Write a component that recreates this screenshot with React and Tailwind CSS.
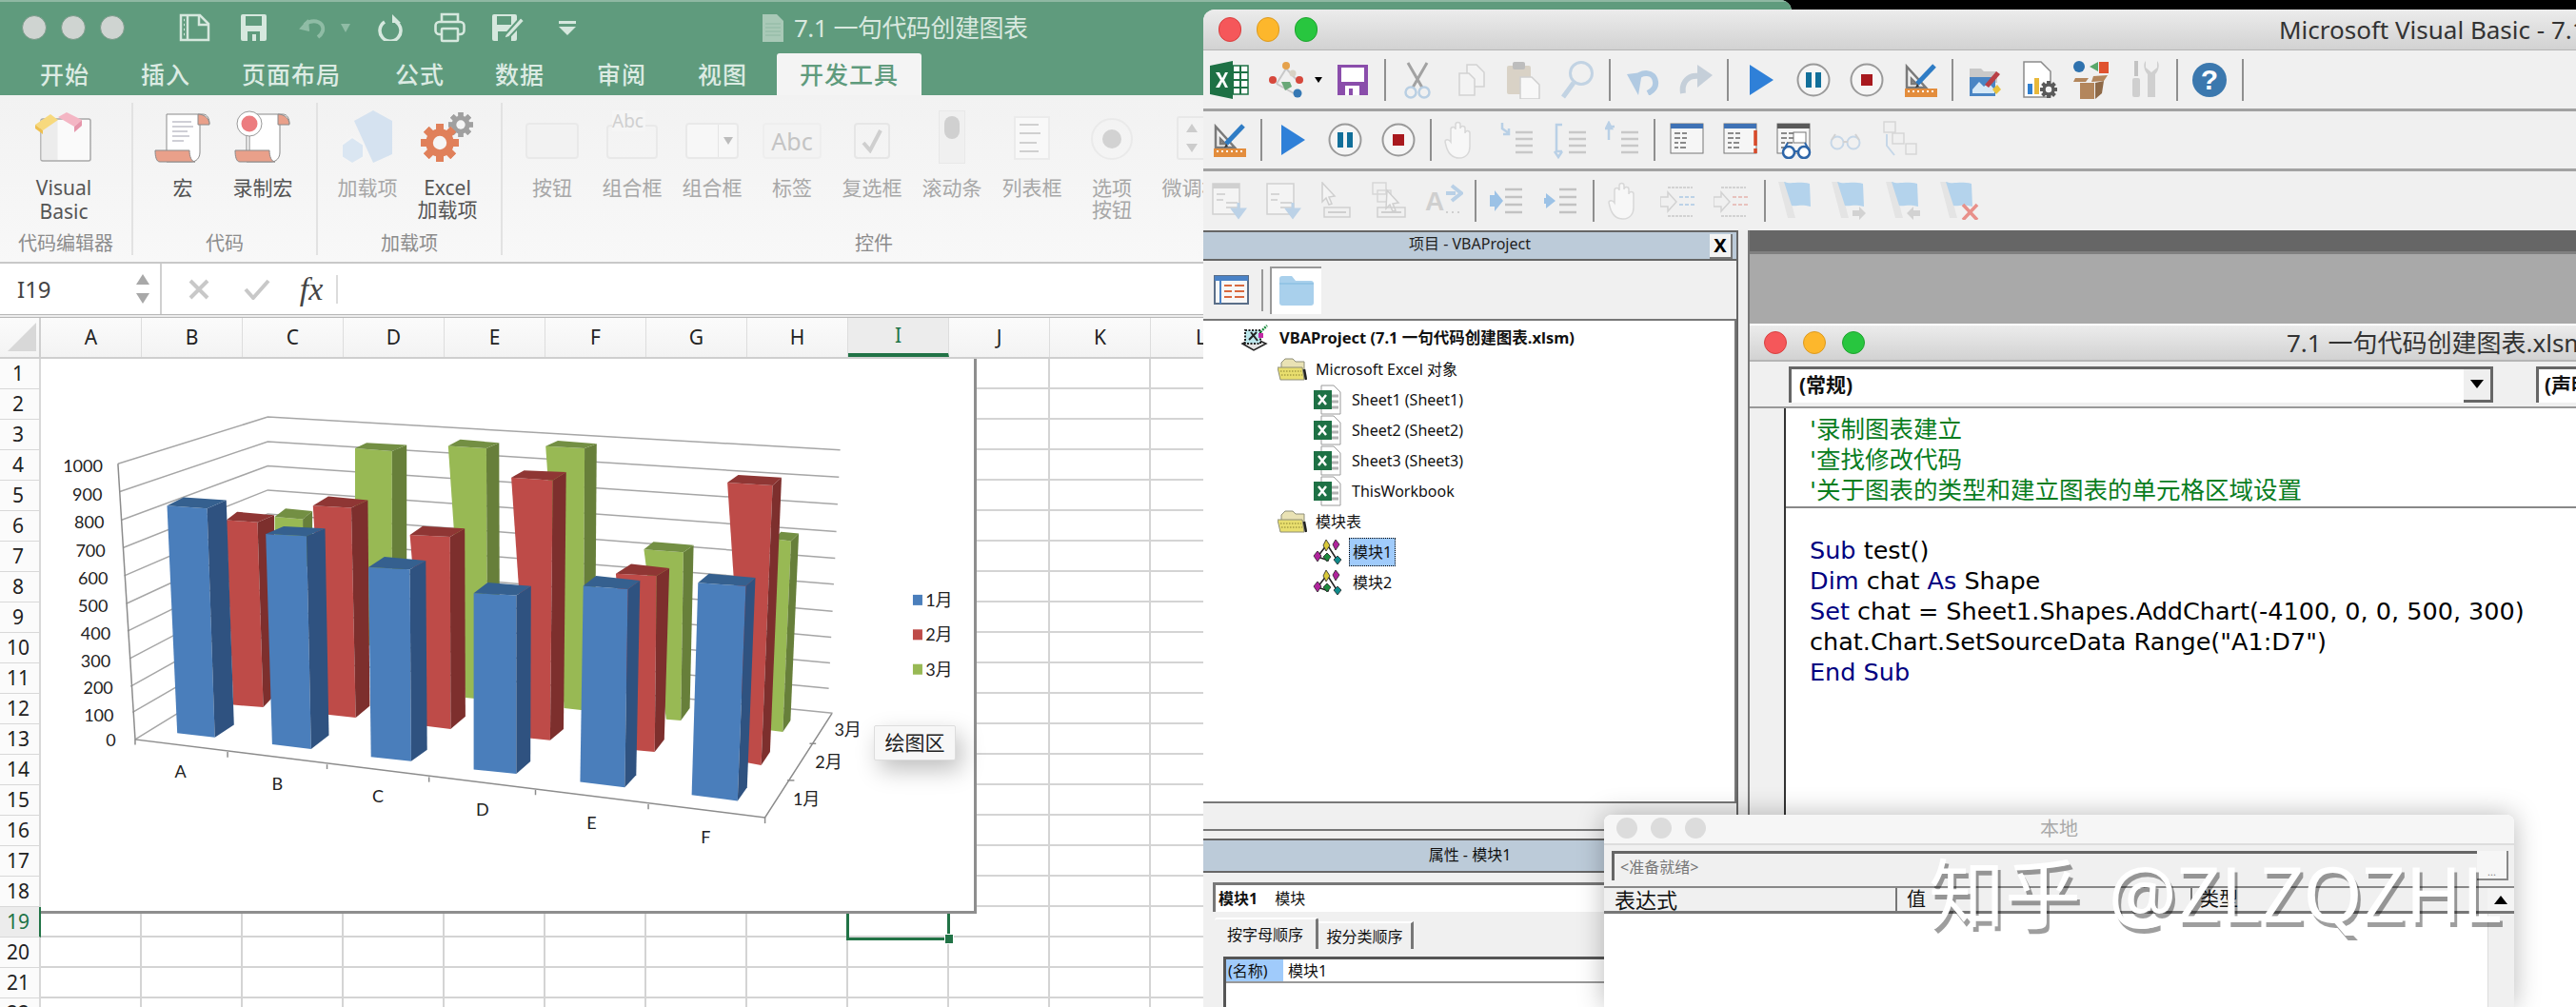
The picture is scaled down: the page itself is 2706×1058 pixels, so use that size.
import React from "react";

const COLS = ["A", "B", "C", "D", "E", "F", "G", "H", "I", "J", "K", "L"];
const ROWS = Array.from({ length: 22 }, (_, i) => i + 1);

// chart points were read off a zoomed crop, these convert them to chart pixels
const X = (c) => c / 1.4933 - 43;
const Y = (c) => c / 2.279 - 6;
const pts = (arr) => arr.map(([x, y]) => `${X(x).toFixed(1)},${Y(y).toFixed(1)}`).join(" ");

const GRID = [
  [[185, 265], [420, 153], [1318, 232]],
  [[187, 332], [420, 212], [1316, 297]],
  [[190, 400], [420, 270], [1314, 362]],
  [[193, 466], [420, 328], [1312, 427]],
  [[195, 533], [420, 385], [1310, 491]],
  [[198, 600], [420, 443], [1308, 553]],
  [[200, 666], [421, 500], [1306, 618]],
  [[203, 732], [421, 557], [1304, 680]],
  [[205, 798], [421, 614], [1302, 742]],
  [[208, 860], [421, 672], [1300, 803]],
  [[212, 925], [422, 728], [1306, 862]],
];

const GREEN = { f: "#98b954", s: "#677f3a", t: "#738f43" };
const RED = { f: "#be4b48", s: "#7d2f2d", t: "#8f3634" };
const BLUE = { f: "#4a7ebb", s: "#2f5280", t: "#35608f" };

// front face, side face, top face
const BARS = [
  [GREEN, [[431, 392], [475, 398], [475, 520], [431, 520]], [[475, 398], [490, 378], [490, 500], [475, 520]], [[431, 392], [448, 372], [490, 378], [475, 398]]],
  [GREEN, [[557, 228], [615, 235], [615, 700], [557, 700]], [[615, 235], [638, 220], [638, 670], [615, 700]], [[557, 228], [575, 215], [638, 220], [615, 235]]],
  [GREEN, [[703, 222], [763, 228], [765, 830], [730, 825]], [[763, 228], [783, 215], [784, 800], [765, 830]], [[703, 222], [722, 207], [783, 215], [763, 228]]],
  [GREEN, [[856, 223], [917, 228], [915, 855], [885, 850]], [[917, 228], [936, 217], [933, 830], [915, 855]], [[856, 223], [875, 210], [936, 217], [917, 228]]],
  [GREEN, [[1010, 470], [1072, 477], [1068, 880], [1045, 877]], [[1072, 477], [1088, 460], [1082, 850], [1068, 880]], [[1010, 470], [1025, 452], [1088, 460], [1072, 477]]],
  [GREEN, [[1215, 445], [1241, 450], [1228, 907], [1208, 903]], [[1241, 450], [1253, 432], [1240, 880], [1228, 907]], [[1215, 445], [1225, 428], [1253, 432], [1241, 450]]],
  [RED, [[355, 400], [404, 405], [413, 848], [366, 842]], [[404, 405], [430, 388], [430, 820], [413, 848]], [[355, 400], [372, 380], [430, 388], [404, 405]]],
  [RED, [[491, 365], [551, 370], [558, 873], [510, 865]], [[551, 370], [577, 352], [580, 845], [558, 873]], [[491, 365], [515, 343], [577, 352], [551, 370]]],
  [RED, [[643, 435], [706, 440], [707, 900], [668, 893]], [[706, 440], [729, 420], [730, 870], [707, 900]], [[643, 435], [663, 414], [729, 420], [706, 440]]],
  [RED, [[802, 298], [867, 305], [863, 927], [830, 922]], [[867, 305], [888, 285], [884, 900], [863, 927]], [[802, 298], [822, 281], [888, 285], [867, 305]]],
  [RED, [[966, 528], [1030, 533], [1027, 955], [990, 950]], [[1030, 533], [1050, 515], [1042, 925], [1027, 955]], [[966, 528], [990, 505], [1050, 515], [1030, 533]]],
  [RED, [[1141, 310], [1212, 317], [1194, 987], [1170, 980]], [[1212, 317], [1226, 298], [1208, 955], [1194, 987]], [[1141, 310], [1158, 292], [1226, 298], [1212, 317]]],
  [BLUE, [[262, 365], [325, 372], [337, 920], [278, 910]], [[325, 372], [355, 352], [367, 890], [337, 920]], [[262, 365], [288, 345], [355, 352], [325, 372]]],
  [BLUE, [[417, 433], [481, 438], [488, 948], [427, 937]], [[481, 438], [510, 420], [516, 915], [488, 948]], [[417, 433], [445, 415], [510, 420], [481, 438]]],
  [BLUE, [[578, 513], [643, 518], [645, 977], [582, 967]], [[643, 518], [668, 497], [670, 950], [645, 977]], [[578, 513], [603, 488], [668, 497], [643, 518]]],
  [BLUE, [[743, 575], [810, 580], [810, 1007], [743, 997]], [[810, 580], [833, 558], [832, 978], [810, 1007]], [[743, 575], [765, 549], [833, 558], [810, 580]]],
  [BLUE, [[915, 557], [985, 565], [980, 1040], [910, 1027]], [[985, 565], [1004, 545], [998, 1010], [980, 1040]], [[915, 557], [935, 533], [1004, 545], [985, 565]]],
  [BLUE, [[1095, 550], [1170, 558], [1157, 1072], [1085, 1058]], [[1170, 558], [1185, 538], [1172, 1040], [1157, 1072]], [[1095, 550], [1112, 528], [1185, 538], [1170, 558]]],
];

const AXIS = [
  ["1000", 130, 270], ["900", 137, 338], ["800", 140, 404], ["700", 142, 471], ["600", 146, 538], ["500", 146, 604],
  ["400", 150, 670], ["300", 150, 735], ["200", 154, 800], ["100", 155, 866], ["0", 174, 926],
  ["A", 283, 1000], ["B", 435, 1030], ["C", 593, 1060], ["D", 757, 1091], ["E", 928, 1123], ["F", 1107, 1157],
  ["1月", 1265, 1067], ["2月", 1300, 977], ["3月", 1330, 900],
];

const Chart = () => (
  <svg width="980" height="580" className="block">
    {GRID.map((g, i) => (
      <polyline key={i} points={pts(g)} fill="none" stroke="#a6a6a6" strokeWidth="1.5" />
    ))}
    <polyline points={pts([[185, 265], [212, 925], [1200, 1112], [1305, 863]])} fill="none" stroke="#8c8c8c" strokeWidth="1.5" />
    {[[357, 955, 357, 968], [513, 985, 513, 996], [673, 1015, 673, 1027], [840, 1046, 840, 1058], [1017, 1080, 1017, 1092], [1200, 1112, 1200, 1126], [212, 925, 212, 938], [1235, 1023, 1246, 1023], [1270, 935, 1280, 935]].map(
      ([a, b, c, d], i) => (
        <line key={i} x1={X(a)} y1={Y(b)} x2={X(c)} y2={Y(d)} stroke="#8c8c8c" strokeWidth="1.5" />
      ),
    )}
    {BARS.map(([c, front, side, top], i) => (
      <g key={i}>
        <polygon points={pts(front)} fill={c.f} />
        <polygon points={pts(side)} fill={c.s} />
        <polygon points={pts(top)} fill={c.t} />
      </g>
    ))}
    {AXIS.map(([t, x, y]) => (
      <text key={t} x={X(x)} y={Y(y)} textAnchor="middle" dominantBaseline="central" fontSize="18" fill="#222" className="font-['Lato','Noto_Sans_CJK_SC',sans-serif]">
        {t}
      </text>
    ))}
    {[["1月", 590, BLUE.f], ["2月", 673, RED.f], ["3月", 756, GREEN.f]].map(([t, y, c]) => (
      <g key={t}>
        <rect x={X(1432)} y={Y(y) - 5} width="10" height="11" fill={c} />
        <text x={X(1473)} y={Y(y)} textAnchor="middle" dominantBaseline="central" fontSize="18" fill="#222" className="font-['Lato','Noto_Sans_CJK_SC',sans-serif]">
          {t}
        </text>
      </g>
    ))}
  </svg>
);

const Lights = ({ gray }) => (
  <div className="flex items-center gap-[15px]">
    <span className={`w-[26px] h-[26px] rounded-full border ${gray ? "bg-[#cfd4d1] border-[#7a9a89]" : "bg-[#f5575a] border-[#d8403f]"}`} />
    <span className={`w-[26px] h-[26px] rounded-full border ${gray ? "bg-[#cfd4d1] border-[#7a9a89]" : "bg-[#fdb72c] border-[#dc9a20]"}`} />
    <span className={`w-[26px] h-[26px] rounded-full border ${gray ? "bg-[#cfd4d1] border-[#7a9a89]" : "bg-[#28c63f] border-[#1ea42f]"}`} />
  </div>
);

/* ---------- excel quick access icons ---------- */
const QA = "#d6e8de";
const QuickBar = () => (
  <div className="flex items-center ml-[57px]">
    <svg width="33" height="30" viewBox="0 0 33 30" fill="none" stroke={QA} strokeWidth="2.5">
      <path d="M2 2h20l9 9v17H2z" fill="#5f9b7d" />
      <path d="M9 2v26M21 2v10h10" />
      <path d="M5 7h1M5 12h1M5 17h1M5 22h1" />
    </svg>
    <svg className="ml-[31px]" width="29" height="30" viewBox="0 0 29 30">
      <path d="M3 1h23a2 2 0 0 1 2 2v24a2 2 0 0 1-2 2H3a2 2 0 0 1-2-2V3a2 2 0 0 1 2-2z" fill={QA} />
      <rect x="6" y="3" width="17" height="10" fill="#5f9b7d" />
      <rect x="8" y="19" width="13" height="10" fill="#5f9b7d" />
      <rect x="13" y="22" width="4" height="7" fill={QA} />
    </svg>
    <svg className="ml-[31px]" width="32" height="24" viewBox="0 0 32 24" fill="none" stroke="#8fbca5" strokeWidth="4">
      <path d="M12 4 4 13l9 2" fill="#8fbca5" strokeWidth="2" />
      <path d="M8 9c6-5 14-5 18 0 3 5 0 10-4 13" />
    </svg>
    <span className="ml-[14px] w-0 h-0 border-x-[5px] border-x-transparent border-t-[9px] border-t-[#8fbca5]" />
    <svg className="ml-[29px]" width="26" height="28" viewBox="0 0 26 28" fill="none" stroke={QA} strokeWidth="3.5">
      <path d="M7 8a11 11 0 1 0 12 0" />
      <path d="M15 0v9h9z" fill={QA} stroke="none" />
    </svg>
    <svg className="ml-[33px]" width="33" height="32" viewBox="0 0 33 32" fill="none" stroke={QA} strokeWidth="2.6">
      <path d="M8 10V2h17v8" />
      <rect x="1.5" y="10" width="30" height="13" rx="4" />
      <rect x="8" y="17" width="17" height="13" rx="1" fill="#5f9b7d" />
    </svg>
    <svg className="ml-[27px]" width="36" height="30" viewBox="0 0 36 30">
      <path d="M3 1h22a2 2 0 0 1 2 2v24a2 2 0 0 1-2 2H3a2 2 0 0 1-2-2V3a2 2 0 0 1 2-2z" fill={QA} />
      <rect x="6" y="3" width="15" height="9" fill="#5f9b7d" />
      <rect x="7" y="19" width="14" height="10" fill="#5f9b7d" />
      <path d="M15 22 31 4l4 4-16 17-6 2z" fill={QA} stroke="#5f9b7d" strokeWidth="2" />
    </svg>
    <svg className="ml-[35px]" width="18" height="15" viewBox="0 0 18 15">
      <rect y="0" width="18" height="3" fill={QA} />
      <path d="M0 6h18l-9 9z" fill={QA} />
    </svg>
  </div>
);

/* ---------- ribbon icons ---------- */
const VisualIcon = () => (
  <svg width="60" height="54" viewBox="0 0 60 54">
    <rect x="6" y="8" width="52" height="44" rx="2" fill="#fafafa" stroke="#a8a8a8" strokeWidth="1.5" />
    <rect x="6.5" y="9" width="17" height="42" fill="#ececec" />
    <path d="M0 14 16 3l8 6-16 11z" fill="#f7d97e" />
    <path d="M0 14l8 6v4l-8-6z" fill="#eebf4f" />
    <path d="M24 6 33 1l16 8-8 7z" fill="#f4b6c4" />
    <path d="M41 16l8-7v6l-8 7z" fill="#e696ab" />
  </svg>
);
const Scroll = ({ record }) => (
  <svg width="60" height="56" viewBox="0 0 60 56" fill="none">
    <path d="M13 4h38c5 0 7 5 7 10H48v30c0 6-4 10-9 10H13z" fill="#fff" stroke="#8a8a8a" strokeWidth="1" />
    <path d="M46 4c5 0 12 3 12 11H46z" fill="#e9a08a" stroke="#8a8a8a" strokeWidth="1" />
    <path d="M1 42h36c0 6 2 12 6 12H6c-4 0-5-6-5-12z" fill="#e9a08a" stroke="#8a8a8a" strokeWidth="1" />
    {record ? (
      <>
        <circle cx="16" cy="14" r="13" fill="#fff" stroke="#9a9a9a" />
        <circle cx="16" cy="14" r="8.5" fill="#ec7c7f" />
        <path d="M16 27v15" stroke="#8a8a8a" />
      </>
    ) : (
      <path d="M19 12h20M19 17h22M19 22h16M19 27h18M19 32h12" stroke="#cfcfd6" strokeWidth="2" />
    )}
  </svg>
);
const AddinIcon = () => (
  <svg width="54" height="56" viewBox="0 0 54 56">
    <path d="M7 11 27 0l20 11v35l-20 9z" fill="#d5e2f0" transform="translate(6 0)" />
    <path d="M0 36l11-8 12 8v13l-12 7-11-7z" fill="#dae6f2" stroke="#f5f5f5" strokeWidth="2" />
  </svg>
);
const Gear = ({ size, fill, cx, cy }) => {
  const teeth = [0, 45, 90, 135, 180, 225, 270, 315];
  return (
    <g transform={`translate(${cx} ${cy})`}>
      {teeth.map((a) => (
        <rect key={a} x={-size * 0.2} y={-size} width={size * 0.4} height={size * 2} fill={fill} transform={`rotate(${a})`} />
      ))}
      <circle r={size * 0.74} fill={fill} />
      <circle r={size * 0.36} fill="#f5f5f5" />
    </g>
  );
};
const GearsIcon = () => (
  <svg width="56" height="54" viewBox="0 0 56 54">
    <Gear size={13} fill="#a0a0a0" cx={42} cy={14} />
    <Gear size={20} fill="#e0805a" cx={20} cy={33} />
  </svg>
);
const BtnIcon = () => (
  <div className="w-[56px] h-[38px] rounded-[4px] border-2 border-[#e9e9e9] bg-[#f2f2f2] mt-[8px]" />
);
const GroupBoxIcon = () => (
  <div className="relative w-[54px] h-[36px] rounded-[4px] border-2 border-[#e9e9e9] mt-[10px]">
    <span className="absolute -top-[17px] left-[4px] bg-[#f5f5f5] pr-[2px] text-[19px] leading-[22px] text-[#d0d0d0]">Abc</span>
  </div>
);
const ComboIcon = () => (
  <div className="flex items-center justify-end w-[56px] h-[38px] rounded-[4px] border-2 border-[#e9e9e9] bg-[#f7f7f7] mt-[8px]">
    <div className="flex items-center justify-center w-[20px] h-full border-l border-[#e5e5e5]">
      <span className="w-0 h-0 border-x-[5px] border-x-transparent border-t-[8px] border-t-[#bcbcbc]" />
    </div>
  </div>
);
const LabelIcon = () => (
  <div className="flex items-center justify-center w-[62px] h-[38px] rounded-[4px] border-2 border-[#eeeeee] bg-[#f3f3f3] text-[25px] text-[#c4c4c4] mt-[8px]">Abc</div>
);
const CheckIcon = () => (
  <div className="flex items-center justify-center w-[38px] h-[38px] rounded-[4px] border-2 border-[#e6e6e6] mt-[8px]">
    <svg width="24" height="26" viewBox="0 0 24 26" fill="none" stroke="#cfcfcf" strokeWidth="4">
      <path d="M3 15l7 8L21 2" />
    </svg>
  </div>
);
const ScrollbarIcon = () => (
  <div className="flex justify-center w-[28px] h-[56px] border border-[#e8e8e8] bg-[#f0f0f0] pt-[5px]">
    <span className="w-[16px] h-[24px] rounded-full bg-[#d0d0d0]" />
  </div>
);
const ListIcon = () => (
  <div className="flex flex-col justify-around w-[38px] h-[46px] border-2 border-[#ebebeb] bg-[#f8f8f8] px-[4px] py-[2px] mt-[2px]">
    <span className="h-[2px] w-[20px] bg-[#d0d0d0]" />
    <span className="h-[2px] w-[22px] bg-[#d0d0d0]" />
    <span className="h-[2px] w-[18px] bg-[#d0d0d0]" />
    <span className="h-[2px] w-[20px] bg-[#d0d0d0]" />
  </div>
);
const RadioIcon = () => (
  <div className="flex items-center justify-center w-[44px] h-[44px] rounded-full border-2 border-[#eaeaea] mt-[3px]">
    <span className="w-[20px] h-[20px] rounded-full bg-[#d2d2d2]" />
  </div>
);
const SpinIcon = () => (
  <div className="flex flex-col items-center justify-around w-[32px] h-[46px] rounded-[3px] border-2 border-[#e8e8e8] mt-[2px]">
    <span className="w-0 h-0 border-x-[6px] border-x-transparent border-b-[9px] border-b-[#cccccc]" />
    <span className="w-0 h-0 border-x-[6px] border-x-transparent border-t-[9px] border-t-[#cccccc]" />
  </div>
);

const RibbonItem = ({ icon, label, sub, off }) => (
  <div className={`flex flex-col items-center w-[84px] shrink-0 text-[21px] leading-[23px] ${off ? "text-[#a8a8a8]" : "text-[#555]"}`}>
    <div className="flex items-center justify-center h-[60px]">{icon}</div>
    <div className="mt-[12px] whitespace-nowrap">{label}</div>
    {sub && <div className="whitespace-nowrap">{sub}</div>}
  </div>
);

const RibbonGroup = ({ title, cls, children }) => (
  <div className={`flex flex-col justify-between h-[160px] border-r-2 border-[#e2e2e2] shrink-0 ${cls}`}>
    <div className="flex pl-[10px] pt-[6px]">{children}</div>
    <div className="text-center text-[20px] leading-[24px] text-[#8c8c8c]">{title}</div>
  </div>
);

const Ribbon = () => (
  <div className="flex h-[175px] bg-gradient-to-b from-[#f2f2f2] to-[#f8f8f8] pt-[8px] shrink-0">
    <RibbonGroup title="代码编辑器" cls="w-[140px]">
      <div className="-ml-[11px] flex flex-col items-center w-[136px] text-[21px] leading-[25px] text-[#555]">
        <div className="flex items-center justify-center h-[60px]"><VisualIcon /></div>
        <div className="mt-[11px]">Visual</div>
        <div>Basic</div>
      </div>
    </RibbonGroup>
    <RibbonGroup title="代码" cls="w-[194px]">
      <RibbonItem icon={<Scroll />} label="宏" />
      <RibbonItem icon={<Scroll record />} label="录制宏" />
    </RibbonGroup>
    <RibbonGroup title="加载项" cls="w-[194px]">
      <RibbonItem icon={<AddinIcon />} label="加载项" off />
      <RibbonItem icon={<GearsIcon />} label="Excel" sub="加载项" />
    </RibbonGroup>
    <div className="flex flex-col justify-between h-[160px] w-[780px] shrink-0">
      <div className="flex pl-[10px] pt-[6px]">
        <RibbonItem icon={<BtnIcon />} label="按钮" off />
        <RibbonItem icon={<GroupBoxIcon />} label="组合框" off />
        <RibbonItem icon={<ComboIcon />} label="组合框" off />
        <RibbonItem icon={<LabelIcon />} label="标签" off />
        <RibbonItem icon={<CheckIcon />} label="复选框" off />
        <RibbonItem icon={<ScrollbarIcon />} label="滚动条" off />
        <RibbonItem icon={<ListIcon />} label="列表框" off />
        <RibbonItem icon={<RadioIcon />} label="选项" sub="按钮" off />
        <RibbonItem icon={<SpinIcon />} label="微调框" off />
      </div>
      <div className="text-center text-[20px] leading-[24px] text-[#8c8c8c]">控件</div>
    </div>
  </div>
);

const TABS = [
  ["开始", "ml-[42px] w-[52px]"],
  ["插入", "ml-[54px] w-[52px]"],
  ["页面布局", "ml-[54px] w-[104px]"],
  ["公式", "ml-[57px] w-[52px]"],
  ["数据", "ml-[53px] w-[52px]"],
  ["审阅", "ml-[55px] w-[52px]"],
  ["视图", "ml-[54px] w-[52px]"],
];

const ExcelWindow = () => (
  <div className="absolute left-0 top-0 w-[1882px] h-[1058px] rounded-tr-xl overflow-hidden flex flex-col bg-white font-['Noto_Sans','Noto_Sans_CJK_SC',sans-serif]">
    <div className="h-[100px] bg-[#5f9b7d] border-t-2 border-[#8fb8a3] shrink-0 flex flex-col">
      <div className="flex items-center h-[54px] pl-[23px]">
        <Lights gray />
        <QuickBar />
        <svg className="ml-[196px]" width="22" height="29" viewBox="0 0 22 29">
          <path d="M0 0h15l7 7v22H0z" fill="#a9c9b7" />
          <path d="M3 10h16M3 14h16M3 18h16M3 22h16" stroke="#8fb8a3" strokeWidth="1" />
        </svg>
        <span className="ml-[11px] text-[26px] text-[#d8e8df] tracking-[-0.5px] whitespace-nowrap">7.1 一句代码创建图表</span>
      </div>
      <div className="flex items-end h-[44px] text-[25px] leading-[44px] font-medium text-[#dcebe3]">
        {TABS.map(([t, cls]) => (
          <span key={t} className={`${cls} text-center whitespace-nowrap tracking-[1px]`}>{t}</span>
        ))}
        <span className="ml-[31px] w-[152px] h-[44px] bg-[#f4f4f4] rounded-t-[3px] text-center text-[#5f9b7d] tracking-[1px]">开发工具</span>
      </div>
    </div>
    <Ribbon />
    {/* formula bar */}
    <div className="flex items-center h-[55px] border-t-2 border-[#c8c8c8] bg-white shrink-0">
      <div className="flex items-center justify-between w-[170px] h-full border-r-2 border-[#d0d0d0] pl-[18px] pr-[11px] text-[24px] text-[#444]">
        I19
        <div className="flex flex-col gap-[9px]">
          <span className="w-0 h-0 border-x-[7px] border-x-transparent border-b-[11px] border-b-[#a8a8a8]" />
          <span className="w-0 h-0 border-x-[7px] border-x-transparent border-t-[11px] border-t-[#a8a8a8]" />
        </div>
      </div>
      <svg className="ml-[28px]" width="22" height="22" viewBox="0 0 22 22" stroke="#c8c8c8" strokeWidth="4"><path d="M2 2l18 18M20 2 2 20" /></svg>
      <svg className="ml-[36px]" width="28" height="22" viewBox="0 0 28 22" fill="none" stroke="#c8c8c8" strokeWidth="4"><path d="M2 11l8 9L26 2" /></svg>
      <span className="ml-[24px] w-[38px] text-center font-['Liberation_Serif',serif] italic text-[34px] text-[#444]">fx</span>
      <span className="ml-[7px] w-[2px] h-[30px] bg-[#dcdcdc]" />
    </div>
    <div className="h-[4px] border-y border-[#b8b8b8] bg-[#ececec] shrink-0" />
    {/* column headers */}
    <div className="flex h-[43px] bg-gradient-to-b from-[#fbfbfb] to-[#f3f3f3] border-b-2 border-[#cfcfcf] shrink-0">
      <div className="relative w-[43px] border-r-2 border-[#cfcfcf] shrink-0">
        <span className="absolute left-[8px] bottom-[6px] w-0 h-0 border-l-[30px] border-l-transparent border-b-[30px] border-b-[#d8d8d8]" />
      </div>
      {COLS.map((c) => (
        <div
          key={c}
          className={`flex items-center justify-center w-[106px] shrink-0 text-[21px] border-r border-[#dddddd] ${c === "I" ? "bg-[#ececec] text-[#217346] border-b-[4px] border-b-[#217346]" : "text-[#222]"}`}
        >
          {c}
        </div>
      ))}
    </div>
    {/* sheet grid */}
    <div className="relative flex-1 overflow-hidden">
      {ROWS.map((r) => (
        <div key={r} className="flex h-[32px]">
          <div
            className={`flex items-center justify-center w-[43px] shrink-0 pr-[3px] text-[21px] border-r-2 border-b border-[#d8d8d8] ${r === 19 ? "bg-[#ececec] text-[#217346] border-r-[#217346]" : "bg-[#fbfbfb] text-[#222]"}`}
          >
            {r}
          </div>
          {COLS.map((c) => (
            <div key={c} className="w-[106px] shrink-0 border-r-2 border-b-2 border-[#d4d4d4]" />
          ))}
        </div>
      ))}
      {/* selected cell I19 */}
      <div className="absolute left-[889px] top-[574px] w-[109px] h-[37px] border-[3px] border-[#217346]" />
      <div className="absolute left-[992px] top-[604px] w-[10px] h-[11px] bg-[#217346] border border-white" />
      {/* embedded chart */}
      <div className="absolute left-[43px] top-0 w-[983px] h-[583px] bg-white border-r-[3px] border-b-[3px] border-[#8e8e8e]">
        <Chart />
        <div className="absolute left-[875px] top-[385px] w-[86px] h-[37px] flex items-center justify-center bg-[#f7f7f7] border border-[#dddddd] rounded-[2px] shadow-[6px_10px_24px_rgba(0,0,0,0.25)] text-[21px] text-[#222]">
          绘图区
        </div>
      </div>
    </div>
  </div>
);

/* ---------- VB toolbar icons ---------- */
const I = ({ w, h = 40, vb, cls, children }) => (
  <svg className={`shrink-0 ${cls || ""}`} width={w} height={h} viewBox={vb || `0 0 ${w} ${h}`} fill="none">
    {children}
  </svg>
);
const Sep = ({ cls }) => <span className={`block shrink-0 w-[2px] h-[44px] bg-[#8f8f8f] ${cls}`} />;

const ExcelLogo = ({ cls }) => (
  <I w={41} cls={cls}>
    <rect x="14" y="5" width="26" height="30" fill="#fff" stroke="#1e7145" strokeWidth="1.5" />
    <path d="M24 5v30M32 5v30M14 12h26M14 20h26M14 28h26" stroke="#1e7145" strokeWidth="2" />
    <path d="M0 5 24 0v40L0 35z" fill="#1e7145" />
    <path d="M6 12l4 0 3 6 3-6 3 0-4 8 4 8-3 0-3-6-3 6-4 0 5-8z" fill="#fff" />
  </I>
);
const ModulesIcon = ({ cls }) => (
  <I w={38} cls={cls}>
    <path d="M19 8 9 24M19 8l13 14M9 24l18 10" stroke="#c8c8c8" strokeWidth="2" />
    <circle cx="19" cy="5" r="4" fill="#e5a24c" />
    <circle cx="26" cy="13" r="3.5" fill="#d8d2c4" />
    <circle cx="5" cy="20" r="4" fill="#d6483c" />
    <circle cx="33" cy="20" r="4" fill="#d6483c" />
    <path d="M14 22h9l2 5-7 4z" fill="#6aa878" />
    <circle cx="31" cy="34" r="4.5" fill="#3578b4" />
  </I>
);
const SaveIcon = ({ cls }) => (
  <I w={32} h={32} cls={cls}>
    <rect width="32" height="32" fill="#8a4dab" />
    <rect x="4" y="3" width="24" height="15" fill="#fff" />
    <rect x="8" y="22" width="15" height="10" fill="#fff" />
    <rect x="12" y="25" width="4" height="7" fill="#8a4dab" />
  </I>
);
const Scissors = ({ cls }) => (
  <I w={28} cls={cls}>
    <path d="M4 2 19 28M24 2 9 28" stroke="#a2a2a2" strokeWidth="3" />
    <circle cx="7" cy="33" r="5.5" stroke="#b9cfe3" strokeWidth="2.5" />
    <circle cx="21" cy="33" r="5.5" stroke="#b9cfe3" strokeWidth="2.5" />
  </I>
);
const CopyIcon = ({ cls }) => (
  <I w={28} h={34} cls={cls} >
    <path d="M9 1h10l8 8v15H9z" stroke="#d2d2d2" strokeWidth="1.5" fill="#f3f3f3" />
    <path d="M1 10h10l6 6v17H1z" stroke="#d2d2d2" strokeWidth="1.5" fill="#f3f3f3" />
  </I>
);
const ClipIcon = ({ cls }) => (
  <I w={35} cls={cls}>
    <rect y="5" width="25" height="30" rx="2" fill="#d9d2c6" />
    <rect x="6" y="1" width="13" height="8" rx="2" fill="#bdbdbd" />
    <path d="M14 17h12l8 8v15H14z" fill="#f8f8f8" stroke="#cfcfcf" strokeWidth="1.5" />
  </I>
);
const SearchIcon = ({ cls }) => (
  <I w={35} cls={cls}>
    <circle cx="22" cy="13" r="11.5" stroke="#c2d3e3" strokeWidth="3" />
    <path d="M14 23 3 38" stroke="#c2d3e3" strokeWidth="5" />
  </I>
);
const UndoIcon = ({ cls }) => (
  <I w={34} h={32} cls={cls}>
    <path d="M0 10 16 8 12 32z" fill="#b1cae2" />
    <path d="M9 16c6-10 20-9 21 2 1 6-4 10-8 12" stroke="#b1cae2" strokeWidth="6" />
  </I>
);
const RedoIcon = ({ cls }) => (
  <I w={35} h={32} cls={cls}>
    <path d="M35 11 19 0v24z" fill="#c5cfd9" />
    <path d="M22 12C10 10 2 18 4 30" stroke="#c5cfd9" strokeWidth="6" />
  </I>
);
const Play = ({ cls }) => (
  <I w={25} h={32} cls={cls}>
    <path d="M0 0 25 16 0 32z" fill="#2f80d8" />
  </I>
);
const Pause = ({ cls }) => (
  <I w={36} h={36} cls={cls}>
    <circle cx="18" cy="18" r="16.5" fill="#f5f5f5" stroke="#9a9a9a" strokeWidth="2" />
    <rect x="10" y="10" width="6" height="16" fill="#116f9a" />
    <rect x="20" y="10" width="6" height="16" fill="#116f9a" />
  </I>
);
const Stop = ({ cls }) => (
  <I w={36} h={36} cls={cls}>
    <circle cx="18" cy="18" r="16.5" fill="#f5f5f5" stroke="#9a9a9a" strokeWidth="2" />
    <rect x="12" y="12" width="12" height="12" fill="#a8191e" />
  </I>
);
const DesignIcon = ({ cls }) => (
  <I w={34} cls={cls}>
    <path d="M2 6v22h20zM7 19v5h5z" stroke="#7a7a7a" strokeWidth="2.5" />
    <path d="M13 24 31 5" stroke="#2f7cc5" strokeWidth="5" />
    <path d="M13 24l-2 4 4-1z" fill="#333" />
    <rect y="29" width="34" height="9" fill="#e38d3d" />
    <path d="M3 32h2M8 32h2M13 32h2M18 32h2M23 32h2M28 32h2" stroke="#fff" strokeWidth="2" />
  </I>
);
const OpenFolder = ({ cls }) => (
  <I w={33} cls={cls}>
    <path d="M0 8h12l3 3h14v12H0z" fill="#c9c9c9" />
    <path d="M0 17h27v20H0z" fill="#4a85c4" />
    <path d="M3 30l7-8 5 5 5-4 6 7v4H3z" fill="#d6e8f6" />
    <path d="M16 25 28 11l4 3-12 14z" fill="#b93f45" />
    <path d="M24 30l5-5 4 5-5 5z" fill="#e8c23c" />
  </I>
);
const ChartDoc = ({ cls }) => (
  <I w={36} cls={cls}>
    <path d="M1 1h18l10 10v27H1z" fill="#fff" stroke="#8a8a8a" strokeWidth="1.5" />
    <rect x="5" y="24" width="5" height="11" fill="#2f7fd0" />
    <rect x="12" y="18" width="5" height="17" fill="#e8b83a" />
    <Gear size={9} fill="#5a5a5a" cx={27} cy={30} />
  </I>
);
const BoxIcon = ({ cls }) => (
  <I w={37} cls={cls}>
    <circle cx="6" cy="6" r="6" fill="#2f72ae" />
    <path d="M17 6 26 1v10z" fill="#59a76a" />
    <rect x="27" y="1" width="10" height="12" fill="#e0522f" />
    <path d="M2 18h14l-3 4H0zM21 16l15-1-4 6-13 1z" fill="#b3865c" />
    <path d="M7 23h15v17H7z" fill="#b3865c" />
    <path d="M23 23l9-2-2 13-7 6z" fill="#8e6947" />
  </I>
);
const ToolsIcon = ({ cls }) => (
  <I w={29} cls={cls}>
    <path d="M5 0v4M5 4v12" stroke="#c2c2c2" strokeWidth="4" />
    <rect x="1" y="18" width="8" height="20" rx="2" fill="#cfcfcf" />
    <path d="M15 0v7l6 5 6-5V0c3 3 2 10-2 14v24h-8V14c-4-4-5-11-2-14z" fill="#cfcfcf" />
  </I>
);
const HelpIcon = ({ cls }) => (
  <svg className={`shrink-0 ${cls}`} width="36" height="36" viewBox="0 0 36 36">
    <circle cx="18" cy="18" r="18" fill="#3b78ae" />
    <text x="18" y="28" textAnchor="middle" fontSize="30" fontWeight="700" fill="#fff" fontFamily="Liberation Sans, sans-serif">?</text>
  </svg>
);
const Hand = ({ cls }) => (
  <I w={32} cls={cls}>
    <path d="M7 22V9a2.5 2.5 0 0 1 5 0V4a2.5 2.5 0 0 1 5 0v4a2.5 2.5 0 0 1 5 0v5a2.5 2.5 0 0 1 5 0v14c0 7-4 12-11 12S4 34 2 26l-1-4c0-3 4-3 6 0z" stroke="#d8d8d8" strokeWidth="1.5" fill="#f7f7f7" />
  </I>
);
const Indent = ({ cls, variant }) => (
  <I w={37} cls={cls}>
    <path d="M17 12h18M17 19h18M17 26h18M17 33h18" stroke="#c8c8c8" strokeWidth="2.5" />
    {variant === 0 && <path d="M3 2v6l7 5M10 8v6H4" stroke="#b9d0e6" strokeWidth="2.5" />}
    {variant === 1 && <path d="M10 4H4v28h6M2 32l4 6 4-6" stroke="#b9d0e6" strokeWidth="2.5" />}
    {variant === 2 && <path d="M4 20V6h6M4 2l-3 6h6z" stroke="#b9d0e6" strokeWidth="2.5" />}
  </I>
);
const WinIcon = ({ cls, top = "#3f72b5", mark }) => (
  <I w={38} cls={cls}>
    <rect x="1" y="3" width="34" height="31" fill="#f6f6f6" stroke="#777" strokeWidth="1" />
    <rect x="1" y="3" width="34" height="5" fill={top} />
    <path d="M5 13h6M13 13h5M5 18h6M13 18h5M5 23h4M11 23h6M5 28h4M11 28h6" stroke="#8a8a8a" strokeWidth="2" />
    {mark === "bang" && <path d="M34 10v16M34 29v5" stroke="#d94a2a" strokeWidth="3.5" />}
    {mark === "glass" && (
      <>
        <rect x="18" y="12" width="13" height="11" fill="#fff" stroke="#777" />
        <circle cx="13" cy="33" r="6" fill="#fff" stroke="#2d65a8" strokeWidth="2.5" />
        <circle cx="29" cy="33" r="6" fill="#fff" stroke="#2d65a8" strokeWidth="2.5" />
        <path d="M19 32h4M8 30l4-7M34 30l-4-7" stroke="#2d65a8" strokeWidth="2" />
      </>
    )}
  </I>
);
const Glasses = ({ cls }) => (
  <I w={33} cls={cls}>
    <circle cx="8" cy="23" r="6.5" stroke="#c6d7e8" strokeWidth="2" />
    <circle cx="25" cy="23" r="6.5" stroke="#c6d7e8" strokeWidth="2" />
    <path d="M14 22h5M2 20l4-6M31 20l-4-6" stroke="#d2d2d2" strokeWidth="2" />
  </I>
);
const StackIcon = ({ cls }) => (
  <I w={36} cls={cls}>
    <rect x="1" y="1" width="12" height="11" stroke="#d6d6d6" strokeWidth="1.5" />
    <rect x="10" y="13" width="12" height="11" stroke="#d6d6d6" strokeWidth="1.5" />
    <rect x="24" y="24" width="11" height="11" stroke="#d6d6d6" strokeWidth="1.5" />
    <path d="M4 14v12l8 10" stroke="#c6d7e8" strokeWidth="2" />
  </I>
);
const ProcIcon = ({ cls, arrow = true }) => (
  <I w={38} cls={cls}>
    <rect x="1" y="2" width="28" height="32" fill="#f4f4f4" stroke="#d0d0d0" strokeWidth="1.5" />
    {arrow && <rect x="1" y="2" width="28" height="5" fill="#d0d0d0" />}
    <path d="M5 13h9M5 19h7M15 22h12M15 27h12" stroke="#d6d6d6" strokeWidth="2" />
    <path d="M28 22v12M22 29l6 8 6-8z" stroke="#bcd2e7" strokeWidth="3" fill="#bcd2e7" />
  </I>
);
const CursorIcon = ({ cls, w = 35, stack }) => (
  <I w={w} cls={cls}>
    {stack && <rect x="1" y="1" width="14" height="12" stroke="#d6d6d6" strokeWidth="1.5" />}
    {stack && <rect x="6" y="9" width="14" height="12" stroke="#d6d6d6" strokeWidth="1.5" />}
    <path d={stack ? "M16 9l12 13-6 1 3 7-3 1-3-7-4 4z" : "M2 1l13 14-6 1 3 7-3 1-3-7-4 4z"} fill="#f4f4f4" stroke="#cfcfcf" strokeWidth="1.5" />
    <rect x={stack ? 6 : 4} y="27" width={w - 8} height="10" stroke="#cfcfcf" strokeWidth="1.5" />
    <path d={`M${stack ? 10 : 8} 32h${w - 16}`} stroke="#cfcfcf" strokeWidth="2" />
  </I>
);
const ReplaceIcon = ({ cls }) => (
  <svg className={`shrink-0 ${cls}`} width="40" height="40" viewBox="0 0 40 40">
    <text x="0" y="30" fontSize="28" fontWeight="700" fill="#cfcfcf" fontFamily="Liberation Sans, sans-serif">A</text>
    <path d="M22 12h10M28 4l10 8-10 8" stroke="#b9d0e6" strokeWidth="4" fill="none" />
    <path d="M22 32h2M28 32h2M34 32h2" stroke="#cfcfcf" strokeWidth="2" />
  </svg>
);
const OutIndent = ({ cls, flip }) => (
  <I w={35} cls={cls}>
    <path d="M16 8h18M16 16h18M16 24h18M16 32h18" stroke="#c2c2c2" strokeWidth="2.5" />
    <path d={flip ? "M12 20 2 12v5H0v6h2v5z" : "M0 14h5V9l9 11-9 11v-5H0z"} fill="#9cc2e6" />
  </I>
);
const CommentIcon = ({ cls, tint }) => (
  <I w={41} cls={cls}>
    <path d="M8 6h26M8 36h26" stroke="#d2d2d2" strokeWidth="2" strokeDasharray="3 1" />
    <path d="M0 16h8v-5l9 10-9 10v-5H0z" stroke="#d2d2d2" strokeWidth="1.5" />
    <path d="M20 16h18M20 24h18" stroke={tint} strokeWidth="2" strokeDasharray="4 2" />
  </I>
);
const Flag = ({ cls, mark }) => (
  <I w={41} cls={cls}>
    <path d="M0 0h8l10 38H10z" fill="#e4e4e4" />
    <path d="M6 0c8 3 14-1 27 2l1 24c-10-3-15 0-20-1z" fill="#b4d3ec" />
    {mark === "next" && <path d="M22 30h7v-4l7 7-7 7v-4h-7z" fill="#d2d2d2" />}
    {mark === "prev" && <path d="M36 30h-7v-4l-7 7 7 7v-4h7z" fill="#d2d2d2" />}
    {mark === "clear" && <path d="M24 24 39 40M39 24 24 40" stroke="#e8908a" strokeWidth="3.5" />}
  </I>
);

const Toolbar = ({ h, children }) => (
  <div className={`flex items-center ${h} bg-[#f0f0f0] border-b-[3px] border-[#a2a2a2] shrink-0`}>{children}</div>
);

/* ---------- project tree icons ---------- */
const VbaIcon = () => (
  <svg className="shrink-0" width="31" height="30" viewBox="0 0 31 30">
    <path d="M3 20 15 27l13-7-13-6z" fill="#e4e4e4" stroke="#222" strokeWidth="1.5" />
    <rect x="6" y="6" width="16" height="14" fill="#bde7ec" stroke="#222" strokeWidth="2" strokeDasharray="2 1.5" />
    <path d="M12 8l7 9M10 16l8-8" stroke="#222" strokeWidth="2" />
    <path d="M22 8 29 1" stroke="#1d8a3e" strokeWidth="2.5" strokeDasharray="2 1" />
    <rect x="20" y="9" width="5" height="5" fill="#c22aa6" />
  </svg>
);
const FolderIcon = () => (
  <svg className="shrink-0" width="31" height="25" viewBox="0 0 31 25">
    <path d="M4 5 8 1h8l3 3h9v18H4z" fill="#e9e2b4" stroke="#8e8e78" strokeWidth="1" />
    <path d="M0 10h26l2 13H3z" fill="#e8de6e" stroke="#8e8e78" strokeWidth="1" />
    <path d="M3 14h22M4 18h22" stroke="#b7ae4e" strokeWidth="2" strokeDasharray="1.5 1.5" />
    <path d="M28 12l2 11" stroke="#222" strokeWidth="2.5" />
  </svg>
);
const SheetIcon = () => (
  <svg className="shrink-0" width="30" height="32" viewBox="0 0 30 32">
    <path d="M9 1h13l7 7v23H9z" fill="#fff" stroke="#9a9a9a" strokeWidth="1" />
    <path d="M20 12h7M20 18h7M20 24h7" stroke="#b4b4b4" strokeWidth="3" />
    <rect x="1" y="6" width="19" height="20" fill="#1e7145" />
    <path d="M6 11l8 10M14 11l-8 10" stroke="#fff" strokeWidth="2.5" />
  </svg>
);
const ModuleIcon = () => (
  <svg className="shrink-0" width="31" height="28" viewBox="0 0 31 28">
    <path d="M15 6 5 19M15 6l11 17M5 19l12 4" stroke="#222" strokeWidth="1.5" />
    <path d="M14 1l4 6-4 6-3-6z" fill="#d8c93a" stroke="#222" strokeWidth="0.8" />
    <path d="M24 1l4 5-4 6-3-6z" fill="#b0239c" stroke="#222" strokeWidth="0.8" />
    <path d="M5 13l4 5-4 6-4-6z" fill="#b0239c" stroke="#222" strokeWidth="0.8" />
    <path d="M15 15l4 4-4 5-4-5z" fill="#1d8a3e" stroke="#222" strokeWidth="0.8" />
    <path d="M26 18l4 4-4 5-4-5z" fill="#0f8a8a" stroke="#222" strokeWidth="0.8" />
  </svg>
);

const TreeRow = ({ icon, indent, gap = "ml-[9px]", children }) => (
  <div className={`flex items-center h-[32px] whitespace-nowrap ${indent}`}>
    {icon}
    <span className={gap}>{children}</span>
  </div>
);

const ProjectPanel = () => (
  <div className="flex flex-col h-[631px] shrink-0">
    <div className="relative flex items-center justify-center h-[32px] pb-[5px] bg-[#bccbd9] border-y-2 border-[#666] text-[16px] text-[#222] shrink-0">
      项目 - VBAProject
      <span className="absolute right-[4px] top-[2px] flex items-center justify-center w-[24px] h-[26px] bg-[#f3f3f3] border-r-2 border-b-2 border-[#777] font-bold text-[20px] leading-none text-black">X</span>
    </div>
    <div className="flex items-center h-[63px] bg-[#f0f0f0] border-b-2 border-[#777] shrink-0">
      <svg className="ml-[11px] shrink-0" width="37" height="31" viewBox="0 0 37 31">
        <rect x="1" y="1" width="35" height="29" fill="#f7f7f7" stroke="#5a6e88" strokeWidth="2" />
        <rect x="1" y="1" width="35" height="5" fill="#4a82c6" />
        <rect x="6" y="1" width="2" height="29" fill="#4a82c6" />
        <path d="M11 11h8M22 11h10M11 17h8M22 17h10M11 23h8M22 23h10" stroke="#d9693f" strokeWidth="2" />
      </svg>
      <span className="ml-[13px] w-[2px] h-[44px] bg-[#999]" />
      <div className="ml-[7px] flex items-center justify-center w-[54px] h-[50px] bg-white border-t-2 border-l-2 border-[#999]">
        <svg width="36" height="31" viewBox="0 0 36 31">
          <path d="M0 3a3 3 0 0 1 3-3h10l4 5h16a3 3 0 0 1 3 3v20a3 3 0 0 1-3 3H3a3 3 0 0 1-3-3z" fill="#a9d0ec" />
          <path d="M0 8h36" stroke="#8ec0e3" strokeWidth="1.5" />
        </svg>
      </div>
    </div>
    <div className="flex-1 bg-white border-r-2 border-[#777] text-[16px] text-[#111]">
      <div className="flex items-center h-[35px] pl-[38px] pt-[2px] font-bold text-[16.5px]">
        <VbaIcon />
        <span className="ml-[11px] whitespace-nowrap">VBAProject (7.1 一句代码创建图表.xlsm)</span>
      </div>
      <TreeRow icon={<FolderIcon />} indent="pl-[78px]">Microsoft Excel 对象</TreeRow>
      <TreeRow icon={<SheetIcon />} indent="pl-[115px]" gap="ml-[11px]">Sheet1 (Sheet1)</TreeRow>
      <TreeRow icon={<SheetIcon />} indent="pl-[115px]" gap="ml-[11px]">Sheet2 (Sheet2)</TreeRow>
      <TreeRow icon={<SheetIcon />} indent="pl-[115px]" gap="ml-[11px]">Sheet3 (Sheet3)</TreeRow>
      <TreeRow icon={<SheetIcon />} indent="pl-[115px]" gap="ml-[11px]">ThisWorkbook</TreeRow>
      <TreeRow icon={<FolderIcon />} indent="pl-[78px]">模块表</TreeRow>
      <div className="flex items-center h-[32px] pl-[115px]">
        <ModuleIcon />
        <span className="ml-[7px] px-[3px] leading-[28px] bg-[#a0cbfb] border border-dotted border-black">模块1</span>
      </div>
      <TreeRow icon={<ModuleIcon />} indent="pl-[115px]" gap="ml-[11px]">模块2</TreeRow>
    </div>
    <div className="h-[31px] bg-[#f0f0f0] border-t-2 border-[#777] border-b-2 shrink-0" />
  </div>
);

const PropsPanel = () => (
  <div className="flex flex-col flex-1 min-h-0 pt-[8px] bg-[#f0f0f0] text-[16px] text-[#111]">
    <div className="flex items-center justify-center h-[36px] pb-[3px] bg-[#bccbd9] border-y-2 border-[#666] shrink-0">属性 - 模块1</div>
    <div className="flex items-center h-[31px] mt-[10px] ml-[10px] bg-white border-t-[3px] border-l-[3px] border-[#777] pl-[3px] shrink-0">
      <b>模块1</b>
      <span className="ml-[18px]">模块</span>
    </div>
    <div className="flex items-end mt-[6px] ml-[12px] h-[33px] shrink-0">
      <div className="flex items-center justify-center w-[109px] h-[33px] bg-[#f0f0f0] border-t-2 border-white border-r-[3px] border-r-[#777] rounded-t-[3px]">按字母顺序</div>
      <div className="flex items-center justify-center w-[100px] h-[29px] bg-[#f0f0f0] border-t-2 border-white border-r-[3px] border-r-[#777]">按分类顺序</div>
    </div>
    <div className="mt-[8px] ml-[21px] flex-1 bg-white border-t-[3px] border-l-[3px] border-[#555]">
      <div className="flex items-center h-[25px] border-b-2 border-[#999]">
        <span className="flex items-center w-[60px] h-full bg-[#a0cbfb] pl-[2px]">(名称)</span>
        <span className="ml-[5px]">模块1</span>
      </div>
    </div>
  </div>
);

const CODE_FONT = "font-['DejaVu_Sans','Noto_Sans_CJK_SC',sans-serif]";

const CodeWindow = () => (
  <div className="flex flex-col flex-1 min-h-0 border-t-2 border-white">
    <div className="flex items-center h-[38px] bg-gradient-to-b from-[#ececec] to-[#d2d2d2] border-b-2 border-[#b5b5b5] pl-[15px] shrink-0">
      <div className="flex items-center gap-[17px]">
        <span className="w-[24px] h-[24px] rounded-full bg-[#f5575a] border border-[#d8403f]" />
        <span className="w-[24px] h-[24px] rounded-full bg-[#fdb72c] border border-[#dc9a20]" />
        <span className="w-[24px] h-[24px] rounded-full bg-[#28c63f] border border-[#1ea42f]" />
      </div>
      <span className="ml-[443px] text-[26px] text-[#333] whitespace-nowrap">7.1 一句代码创建图表.xlsm</span>
    </div>
    <div className="flex items-center h-[49px] bg-[#f0f0f0] border-b-2 border-[#999] shrink-0 text-[21px] font-bold text-[#111]">
      <div className="ml-[41px] flex items-center w-[740px] h-[38px] bg-white border-t-[3px] border-l-[3px] border-[#666] shrink-0">
        <span className="ml-[8px]">(常规)</span>
        <div className="ml-auto flex items-center justify-center w-[31px] h-full bg-[#efefef] border-r-[3px] border-b-[3px] border-[#666]">
          <span className="w-0 h-0 border-x-[7px] border-x-transparent border-t-[9px] border-t-black" />
        </div>
      </div>
      <div className="ml-[45px] flex items-center flex-1 h-[38px] bg-white border-t-[3px] border-l-[3px] border-[#666] pl-[6px] overflow-hidden whitespace-nowrap">(声明)</div>
    </div>
    <div className="flex flex-1 min-h-0 bg-white">
      <div className="w-[38px] bg-[#f0f0f0] border-r-2 border-[#333] shrink-0" />
      <div className={`flex-1 pt-[6px] text-[25.5px] leading-[32px] text-black whitespace-nowrap ${CODE_FONT}`}>
        <div className="pl-[25px] pb-[1px] border-b-2 border-[#888] text-[#0a7d1f]">
          <div>'录制图表建立</div>
          <div>'查找修改代码</div>
          <div>'关于图表的类型和建立图表的单元格区域设置</div>
        </div>
        <div className="pl-[25px] pt-[28px]">
          <div><span className="text-[#000080]">Sub</span> test()</div>
          <div><span className="text-[#000080]">Dim</span> chat <span className="text-[#000080]">As</span> Shape</div>
          <div><span className="text-[#000080]">Set</span> chat = Sheet1.Shapes.AddChart(-4100, 0, 0, 500, 300)</div>
          <div>chat.Chart.SetSourceData Range("A1:D7")</div>
          <div><span className="text-[#000080]">End Sub</span></div>
        </div>
      </div>
    </div>
  </div>
);

const VbWindow = () => (
  <div className="absolute left-[1264px] top-[10px] w-[1442px] h-[1048px] rounded-tl-xl overflow-hidden flex flex-col bg-[#f0f0f0] font-['Noto_Sans','Noto_Sans_CJK_SC',sans-serif]">
    <div className="flex items-center h-[43px] bg-gradient-to-b from-[#ececec] to-[#d2d2d2] border-b border-[#b5b5b5] pl-[16px] shrink-0">
      <div className="flex items-center gap-[16px]">
        <span className="w-[24px] h-[26px] rounded-full bg-[#f5575a] border border-[#d8403f]" />
        <span className="w-[24px] h-[26px] rounded-full bg-[#fdb72c] border border-[#dc9a20]" />
        <span className="w-[24px] h-[26px] rounded-full bg-[#28c63f] border border-[#1ea42f]" />
      </div>
      <span className="ml-[1010px] text-[26px] text-[#333] whitespace-nowrap">Microsoft Visual Basic - 7.1 一句代码创建图表.xlsm</span>
    </div>
    <Toolbar h="h-[64px]">
      <ExcelLogo cls="ml-[7px]" />
      <ModulesIcon cls="ml-[20px]" />
      <span className="ml-[11px] shrink-0 w-0 h-0 border-x-[4px] border-x-transparent border-t-[6px] border-t-black" />
      <SaveIcon cls="ml-[16px]" />
      <Sep cls="ml-[17px]" />
      <Scissors cls="ml-[19px]" />
      <CopyIcon cls="ml-[29px]" />
      <ClipIcon cls="ml-[23px]" />
      <SearchIcon cls="ml-[21px]" />
      <Sep cls="ml-[16px]" />
      <UndoIcon cls="ml-[17px]" />
      <RedoIcon cls="ml-[21px]" />
      <Sep cls="ml-[15px]" />
      <Play cls="ml-[22px]" />
      <Pause cls="ml-[24px]" />
      <Stop cls="ml-[20px]" />
      <DesignIcon cls="ml-[22px]" />
      <Sep cls="ml-[15px]" />
      <OpenFolder cls="ml-[17px]" />
      <ChartDoc cls="ml-[23px]" />
      <BoxIcon cls="ml-[17px]" />
      <ToolsIcon cls="ml-[24px]" />
      <Sep cls="ml-[18px]" />
      <HelpIcon cls="ml-[15px]" />
      <Sep cls="ml-[16px]" />
    </Toolbar>
    <Toolbar h="h-[63px]">
      <DesignIcon cls="ml-[11px]" />
      <Sep cls="ml-[15px]" />
      <Play cls="ml-[20px]" />
      <Pause cls="ml-[24px]" />
      <Stop cls="ml-[20px]" />
      <Sep cls="ml-[15px]" />
      <Hand cls="ml-[13px]" />
      <Indent variant={0} cls="ml-[26px]" />
      <Indent variant={1} cls="ml-[19px]" />
      <Indent variant={2} cls="ml-[18px]" />
      <Sep cls="ml-[14px]" />
      <WinIcon cls="ml-[15px]" />
      <WinIcon mark="bang" cls="ml-[18px]" />
      <WinIcon mark="glass" top="#5a5a5a" cls="ml-[18px]" />
      <Glasses cls="ml-[18px]" />
      <StackIcon cls="ml-[23px]" />
    </Toolbar>
    <div className="flex items-center h-[62px] bg-[#f0f0f0] shrink-0">
      <ProcIcon cls="ml-[9px]" />
      <ProcIcon arrow={false} cls="ml-[19px]" />
      <CursorIcon cls="ml-[19px]" />
      <CursorIcon stack w={37} cls="ml-[19px]" />
      <ReplaceIcon cls="ml-[19px]" />
      <Sep cls="ml-[12px]" />
      <OutIndent cls="ml-[14px]" />
      <OutIndent flip cls="ml-[22px]" />
      <Sep cls="ml-[16px]" />
      <Hand cls="ml-[14px]" />
      <CommentIcon tint="#bcd2e7" cls="ml-[23px]" />
      <CommentIcon tint="#e8c2bd" cls="ml-[15px]" />
      <Sep cls="ml-[12px]" />
      <Flag cls="ml-[13px]" />
      <Flag mark="next" cls="ml-[15px]" />
      <Flag mark="prev" cls="ml-[16px]" />
      <Flag mark="clear" cls="ml-[16px]" />
    </div>
    <div className="flex flex-1 min-h-0">
      <div className="flex flex-col w-[562px] shrink-0 border-r-[2px] border-[#666]">
        <ProjectPanel />
        <PropsPanel />
      </div>
      <div className="w-[12px] bg-[#eeeeee] border-r-2 border-[#777] shrink-0" />
      <div className="flex flex-col flex-1 min-w-0 border-t-2 border-[#666]">
        <div className="h-[23px] bg-[#666666] border-b-[3px] border-[#808080] shrink-0" />
        <div className="h-[73px] bg-[#a9a9a9] shrink-0" />
        <CodeWindow />
      </div>
    </div>
  </div>
);

const LocalsWindow = () => (
  <div className="absolute left-[1685px] top-[856px] w-[956px] h-[202px] bg-white rounded-t-lg overflow-hidden flex flex-col shadow-[0_0_28px_rgba(0,0,0,0.28)] font-['Noto_Sans','Noto_Sans_CJK_SC',sans-serif]">
    <div className="relative flex items-center justify-center h-[32px] bg-[#f6f6f6] border-b-2 border-[#dddddd] text-[20px] text-[#aaaaaa] shrink-0">
      <div className="absolute left-[13px] top-[3px] flex gap-[14px]">
        <span className="w-[22px] h-[22px] rounded-full bg-[#dcdcdc]" />
        <span className="w-[22px] h-[22px] rounded-full bg-[#dcdcdc]" />
        <span className="w-[22px] h-[22px] rounded-full bg-[#dcdcdc]" />
      </div>
      本地
    </div>
    <div className="flex items-center h-[45px] bg-[#f0f0f0] border-b-2 border-[#888] pl-[8px] pr-[6px] shrink-0">
      <div className="flex items-center flex-1 h-[31px] border-t-[3px] border-l-[3px] border-[#666] pl-[6px] text-[16px] text-[#777]">&lt;准备就绪&gt;</div>
      <div className="flex items-end justify-center w-[33px] h-[31px] bg-[#f6f6f6] border-r-2 border-b-2 border-[#888] text-[11px] leading-[14px] text-[#888]">...</div>
    </div>
    <div className="flex h-[27px] bg-[#f0f0f0] border-b-[3px] border-[#777] text-[22px] leading-[24px] text-[#111] shrink-0">
      <div className="w-[308px] pl-[11px] border-r-2 border-[#777] whitespace-nowrap">表达式</div>
      <div className="w-[310px] pl-[10px] border-r-2 border-[#777] text-[20px]">值</div>
      <div className="flex-1 pl-[8px] text-[20px]">类型</div>
      <div className="flex items-center justify-center w-[28px] bg-[#f4f4f4]">
        <span className="w-0 h-0 border-x-[7px] border-x-transparent border-b-[9px] border-b-black" />
      </div>
    </div>
    <div className="flex flex-1 min-h-0">
      <div className="flex-1" />
      <div className="w-[28px] bg-[#f0f0f0] border-l border-[#dddddd]" />
    </div>
  </div>
);

export default function App() {
  return (
    <div className="relative w-[2706px] h-[1058px] overflow-hidden bg-black">
      <ExcelWindow />
      <VbWindow />
      <LocalsWindow />
      {/* watermark */}
      <div className="absolute left-[2026px] top-[884px] w-[614px] overflow-hidden whitespace-nowrap text-[80px] leading-[108px] font-normal text-white [word-spacing:8px] [text-shadow:3px_5px_0_rgba(0,0,0,0.38)] font-['Noto_Sans','Noto_Sans_CJK_SC',sans-serif]">
        知乎 @ZLZQZHL
      </div>
    </div>
  );
}
